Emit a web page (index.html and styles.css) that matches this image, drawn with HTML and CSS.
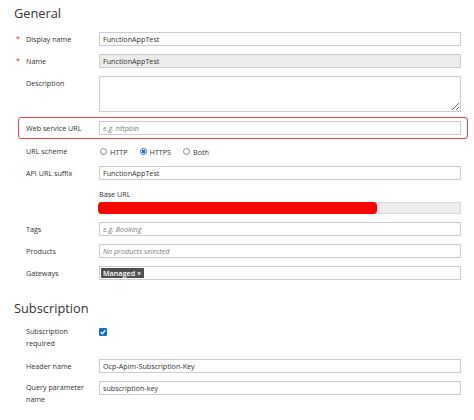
FILE: index.html
```html
<!DOCTYPE html>
<html lang="en">
<head>
<meta charset="utf-8">
<title>General</title>
<link rel="stylesheet" href="styles.css">
</head>
<body>
<div class="page">
  <h2 class="section-title first">General</h2>

  <div class="row">
    <span class="req">*</span>
    <label class="lbl">Display name</label>
    <div class="ctl"><input class="field" type="text" value="FunctionAppTest"></div>
  </div>

  <div class="row">
    <span class="req">*</span>
    <label class="lbl">Name</label>
    <div class="ctl"><input class="field ro" type="text" value="FunctionAppTest" readonly></div>
  </div>

  <div class="row">
    <span class="req"></span>
    <label class="lbl">Description</label>
    <div class="ctl"><textarea class="field area"></textarea></div>
  </div>

  <div class="row hl">
    <label class="lbl">Web service URL</label>
    <div class="ctl"><input class="field" type="text" placeholder="e.g. httpbin"></div>
  </div>

  <div class="row radio-row">
    <span class="req"></span>
    <label class="lbl">URL scheme</label>
    <div class="ctl radios">
      <span class="radio"><span class="dot"></span>HTTP</span>
      <span class="radio on"><span class="dot"></span>HTTPS</span>
      <span class="radio"><span class="dot"></span>Both</span>
    </div>
  </div>

  <div class="row">
    <span class="req"></span>
    <label class="lbl">API URL suffix</label>
    <div class="ctl"><input class="field" type="text" value="FunctionAppTest"></div>
  </div>

  <div class="row">
    <span class="req"></span>
    <span class="lbl"></span>
    <div class="ctl">
      <div class="base-label">Base URL</div>
      <div class="base-box"><div class="redact"></div></div>
    </div>
  </div>

  <div class="row">
    <span class="req"></span>
    <label class="lbl">Tags</label>
    <div class="ctl"><input class="field" type="text" placeholder="e.g. Booking"></div>
  </div>

  <div class="row">
    <span class="req"></span>
    <label class="lbl">Products</label>
    <div class="ctl"><input class="field" type="text" placeholder="No products selected"></div>
  </div>

  <div class="row">
    <span class="req"></span>
    <label class="lbl">Gateways</label>
    <div class="ctl"><div class="field tagbox"><span class="tag">Managed ×</span></div></div>
  </div>

  <h2 class="section-title">Subscription</h2>

  <div class="row tall">
    <span class="req"></span>
    <label class="lbl two">Subscription<br>required</label>
    <div class="ctl">
      <span class="check"><svg width="8" height="8" viewBox="0 0 8 8"><rect x="0" y="0" width="8" height="8" rx="1.2" fill="#0b6fd0"/><path d="M1.7 4.1 L3.3 5.7 L6.4 2.3" fill="none" stroke="#fff" stroke-width="1.3"/></svg></span>
    </div>
  </div>

  <div class="row">
    <span class="req"></span>
    <label class="lbl">Header name</label>
    <div class="ctl"><input class="field" type="text" value="Ocp-Apim-Subscription-Key"></div>
  </div>

  <div class="row">
    <span class="req"></span>
    <label class="lbl two">Query parameter<br>name</label>
    <div class="ctl"><input class="field" type="text" value="subscription-key"></div>
  </div>
</div>
</body>
</html>
```

FILE: styles.css
```css
html, body {
  margin: 0;
  padding: 0;
  background: #ffffff;
}

body {
  font-family: "Open Sans", "Noto Sans", sans-serif;
  color: #333333;
  font-size: 7.2px;
}

.page {
  width: 474px;
}

.section-title {
  margin: 19px 0 8px 0;
  padding-left: 14px;
  font-size: 12.8px;
  line-height: 18px;
  font-weight: 400;
  color: #333333;
}

.section-title.first {
  margin-top: 0;
  padding-top: 4px;
  margin-bottom: 10px;
}

.row {
  display: grid;
  grid-template-columns: 10px 73px 362px;
  align-items: start;
  padding-left: 16px;
  margin-bottom: 8px;
}

.req {
  color: #d0312d;
  font-size: 7.2px;
  line-height: 12px;
}

.lbl {
  line-height: 14px;
  color: #333333;
  white-space: nowrap;
}

.lbl.two {
  line-height: 12px;
}

.ctl {
  min-width: 0;
}

.field {
  display: block;
  box-sizing: border-box;
  width: 100%;
  height: 14px;
  margin: 0;
  padding: 0 3px;
  border: 1px solid #cccccc;
  border-radius: 0;
  background: #ffffff;
  font-family: inherit;
  font-size: 7.2px;
  color: #333333;
  outline: none;
}

.field::placeholder {
  color: #7a7a7a;
  font-style: italic;
}

.field.ro {
  background: #ececec;
}

.area {
  height: 36px;
  resize: vertical;
}

.hl {
  grid-template-columns: 73px 362px;
  margin: -3px 6px 6px 18px;
  padding: 3px 6px 3px 7px;
  border: 1px solid #d9434b;
  border-radius: 3px;
  width: 450px;
  box-sizing: border-box;
}

.radio-row .lbl {
  line-height: 13px;
}

.radios {
  display: flex;
  align-items: center;
  height: 13px;
  padding-left: 1px;
  gap: 12px;
}

.radio {
  display: inline-flex;
  align-items: center;
  gap: 3px;
  color: #333333;
}

.dot {
  display: inline-block;
  box-sizing: border-box;
  width: 7px;
  height: 7px;
  border: 1px solid #8a8a8a;
  border-radius: 50%;
  background: #ffffff;
}

.radio.on .dot {
  border-color: #0b6fd0;
  background: radial-gradient(circle, #0b6fd0 0 1.7px, #ffffff 2px);
}

.base-label {
  line-height: 13px;
  margin-top: 0;
}

.base-box {
  box-sizing: border-box;
  height: 12px;
  margin-top: 1px;
  border: 1px solid #d6d6d6;
  background: #ececec;
}

.redact {
  width: 279px;
  height: 12px;
  margin: -1px 0 0 -2px;
  background: #ff0000;
  border-radius: 4px;
}

.tagbox {
  display: flex;
  align-items: center;
  padding: 0 1px;
}

.tag {
  display: inline-block;
  background: #4f4f4f;
  color: #ffffff;
  font-weight: 600;
  line-height: 10px;
  padding: 0 3px 0 2px;
}

.tall {
  margin-bottom: 10px;
}

.check {
  display: block;
  width: 8px;
  height: 8px;
  margin-top: 3px;
}

.check svg {
  display: block;
}
```
